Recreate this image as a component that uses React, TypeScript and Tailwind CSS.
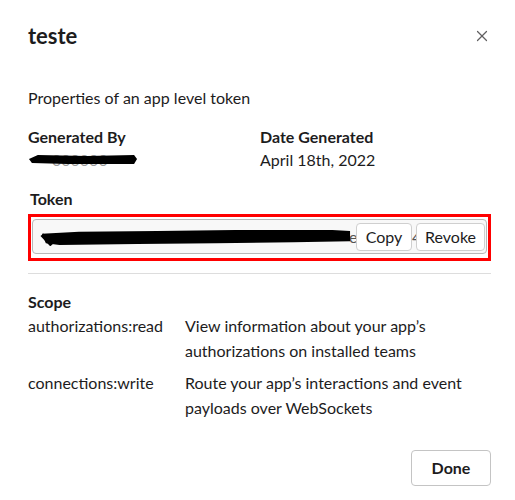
import { X } from "lucide-react";

const scopes = [
  {
    name: "authorizations:read",
    text: ["View information about your app’s", "authorizations on installed teams"],
  },
  {
    name: "connections:write",
    text: ["Route your app’s interactions and event", "payloads over WebSockets"],
  },
];

function Scribble({ className = "", wide = false }: { className?: string; wide?: boolean }) {
  return wide ? (
    <svg aria-hidden viewBox="0 0 320 18" className={className} preserveAspectRatio="none">
      <path
        d="M2 5 L40 3 L120 2 L200 1 L300 1 L318 2 L318 13 L260 14 L180 15 L100 16 L20 17 L6 15 Z"
        fill="#000"
      />
      <path d="M2 6 L12 17" stroke="#000" strokeWidth="4" />
    </svg>
  ) : (
    <svg aria-hidden viewBox="0 0 112 12" className={className} preserveAspectRatio="none">
      <path d="M1 6 L10 2 L60 3 L108 2 L111 6 L108 11 L40 11 L4 10 Z" fill="#000" />
    </svg>
  );
}

export default function App() {
  return (
    <div
      className="h-[500px] w-full bg-white text-[#1d1c1d]"
      style={{ fontFamily: "Lato, 'Noto Sans', sans-serif" }}
    >
      <div className="flex items-center justify-between pl-7 pr-6 pt-[22px]">
        <h1 className="text-[22px] font-bold leading-7">teste</h1>
        <button type="button" aria-label="Close" className="text-[#616061]">
          <X size={18} strokeWidth={1.6} />
        </button>
      </div>

      <div className="pl-7 pr-6 pt-[37px] text-[16px] leading-[22px]">
        <p>Properties of an app level token</p>

        <div className="mt-[17px] grid grid-cols-[232px_1fr]">
          <div>
            <div className="font-bold">Generated By</div>
            <div className="relative h-[24px]">
              <span className="absolute left-[24px] top-[1px] text-[#9a9a9a]">000000</span>
              <Scribble className="absolute left-0 top-[5px] h-[12px] w-[110px]" />
            </div>
          </div>
          <div>
            <div className="font-bold">Date Generated</div>
            <div className="leading-[24px]">April 18th, 2022</div>
          </div>
        </div>

        <div className="mt-[16px] pl-[2px] font-bold">Token</div>

        <div className="mt-[4px] border-[3px] border-[#ff0000] px-px pb-[4px] pt-[2px]">
          <div className="flex h-[35px] items-center rounded-sm border border-[#b8b8b8] bg-[#f8f8f8]">
            <div className="relative h-full flex-1 overflow-hidden">
              <span className="absolute left-[316px] top-[6px] text-[#555]">ef</span>
              <Scribble wide className="absolute left-[7px] top-[9px] h-[17px] w-[312px]" />
            </div>
            <div className="flex items-center pr-px">
              <button
                type="button"
                className="h-[28px] w-[56px] rounded border border-[#cfcfcf] bg-white"
              >
                Copy
              </button>
              <span className="w-[4px] overflow-hidden text-[#555]">4</span>
              <button
                type="button"
                className="h-[28px] w-[69px] rounded border border-[#cfcfcf] bg-white"
              >
                Revoke
              </button>
            </div>
          </div>
        </div>

        <div className="mt-[12px] border-t border-[#dddddd]" />

        <div className="mt-[17px] font-bold">Scope</div>
        <div className="flex flex-col gap-[7px] leading-[25px]">
          {scopes.map((s) => (
            <div key={s.name} className="grid grid-cols-[157px_1fr]">
              <div>{s.name}</div>
              <div>
                {s.text.map((t) => (
                  <div key={t}>{t}</div>
                ))}
              </div>
            </div>
          ))}
        </div>

        <div className="mt-[30px] flex justify-end">
          <button
            type="button"
            className="h-[36px] w-[80px] rounded border border-[#c4c4c4] bg-white font-bold"
          >
            Done
          </button>
        </div>
      </div>
    </div>
  );
}
